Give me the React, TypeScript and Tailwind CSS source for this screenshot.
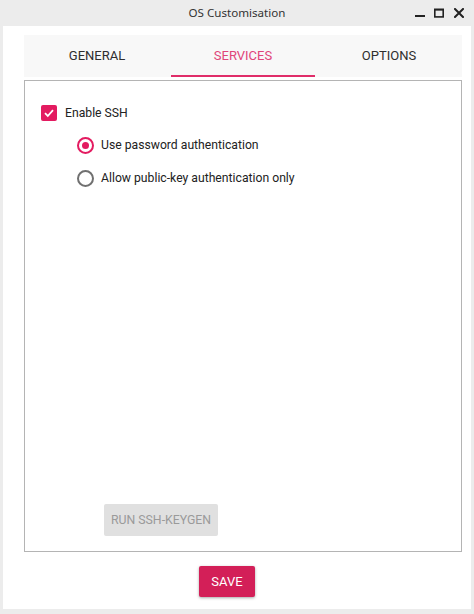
import React from "react";

export default function App() {
  return (
    <div className="w-[474px] h-[614px] bg-[#ececec] flex flex-col overflow-hidden" style={{ fontFamily: "Roboto, 'Liberation Sans', sans-serif" }}>
      {/* Title bar */}
      <div className="h-[26px] flex items-center relative shrink-0">
        <div className="flex-1 text-center text-[11.6px] text-[#333] pb-[1px]" style={{ fontFamily: "'Noto Sans', 'Open Sans', sans-serif" }}>
          OS Customisation
        </div>
        <div className="absolute left-[415px] top-[8px] flex items-center">
          <svg width="10" height="10" viewBox="0 0 10 10"><rect x="0" y="7" width="10" height="2" fill="#222" /></svg>
          <svg className="ml-[9px]" width="10" height="10" viewBox="0 0 10 10"><rect x="0.8" y="1.3" width="8.4" height="7.6" fill="none" stroke="#222" strokeWidth="1.6" /><rect x="0.8" y="1" width="8.4" height="1.6" fill="#222" /></svg>
          <svg className="ml-[10px]" width="10" height="10" viewBox="0 0 10 10"><path d="M1 1 L9 9 M9 1 L1 9" stroke="#222" strokeWidth="2" strokeLinecap="square" /></svg>
        </div>
      </div>

      {/* Window body */}
      <div className="flex-1 mx-[3px] mb-[5px] bg-white flex flex-col items-start">
        {/* Tabs */}
        <div className="mt-[9px] ml-[21px] w-[438px] h-[42px] bg-[#f8f8f8] flex">
          <div className="flex-1 flex items-center justify-center text-[13px] text-[#2e2e2e]">GENERAL</div>
          <div className="flex-1 flex items-center justify-center text-[13px] text-[#e0457a] relative">
            SERVICES
            <div className="absolute left-[1px] right-[1px] bottom-0 h-[2px] bg-[#e02d69]" />
          </div>
          <div className="flex-1 flex items-center justify-center text-[13px] text-[#2e2e2e]">OPTIONS</div>
        </div>

        {/* Content box */}
        <div className="mt-[3px] ml-[21px] w-[438px] h-[472px] border border-[#b4b4b4] flex flex-col">
          <div className="mt-[22px] ml-[16px] h-[20px] flex items-center gap-[8px]">
            <div className="w-[16px] h-[16px] rounded-[2px] bg-[#e31b60] flex items-center justify-center">
              <svg width="12" height="12" viewBox="0 0 12 12"><path d="M2 6.2 L4.8 9 L10 3.2" fill="none" stroke="white" strokeWidth="1.8" /></svg>
            </div>
            <span className="text-[12.2px] leading-[20px] text-[#222]">Enable SSH</span>
          </div>

          <div className="mt-[12px] ml-[52px] h-[20px] flex items-center gap-[7px]">
            <div className="w-[17px] h-[17px] rounded-full border-2 border-[#e31b60] flex items-center justify-center">
              <div className="w-[7px] h-[7px] rounded-full bg-[#e31b60]" />
            </div>
            <span className="text-[12.2px] leading-[20px] text-[#222]">Use password authentication</span>
          </div>

          <div className="mt-[13px] ml-[52px] h-[20px] flex items-center gap-[7px]">
            <div className="w-[17px] h-[17px] rounded-full border-2 border-[#707070]" />
            <span className="text-[12.2px] leading-[20px] text-[#222]">Allow public-key authentication only</span>
          </div>

          <div className="flex-1" />
          <div className="ml-[79px] mb-[15px] w-[114px] h-[32px] bg-[#e0e0e0] rounded-[2px] flex items-center justify-center text-[12.3px] text-[#9a9a9a]">
            RUN SSH-KEYGEN
          </div>
        </div>

        {/* Save */}
        <div className="mt-[14px] ml-[196px] w-[56px] h-[31px] bg-[#d31f58] rounded-[2px] shadow-[0_1px_3px_rgba(0,0,0,0.35)] flex items-center justify-center text-[13px] text-white">
          SAVE
        </div>
      </div>
    </div>
  );
}
